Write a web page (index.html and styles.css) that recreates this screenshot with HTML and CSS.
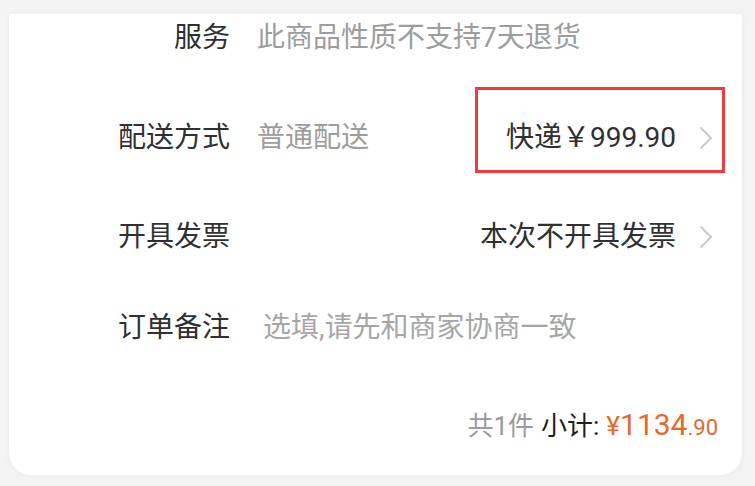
FILE: index.html
```html
<!DOCTYPE html>
<html lang="zh-CN">
<head>
<meta charset="utf-8">
<title>订单确认</title>
<link rel="stylesheet" href="styles.css">
</head>
<body>
<div class="card">
  <div class="row">
    <span class="label">服务</span>
    <span class="value">此商品性质不支持7天退货</span>
  </div>
  <div class="row row-delivery">
    <span class="label">配送方式</span>
    <span class="value">普通配送</span>
    <div class="action highlight">
      <span class="action-text">快递￥999.90</span>
      <svg class="chev" width="14" height="24" viewBox="0 0 14 24"><polyline points="2,2 12,12 2,22" fill="none" stroke="#cbcbcb" stroke-width="2" stroke-linecap="round" stroke-linejoin="round"/></svg>
    </div>
  </div>
  <div class="row row-invoice">
    <span class="label">开具发票</span>
    <div class="action">
      <span class="action-text">本次不开具发票</span>
      <svg class="chev" width="14" height="24" viewBox="0 0 14 24"><polyline points="2,2 12,12 2,22" fill="none" stroke="#cbcbcb" stroke-width="2" stroke-linecap="round" stroke-linejoin="round"/></svg>
    </div>
  </div>
  <div class="row row-note">
    <span class="label">订单备注</span>
    <span class="placeholder">选填,请先和商家协商一致</span>
  </div>
  <div class="row row-total">
    <span class="count">共1件</span>
    <span class="subtotal">小计:</span>
    <span class="price"><span class="cur">¥</span><span class="int">1134</span><span class="dec">.90</span></span>
  </div>
</div>
</body>
</html>
```

FILE: styles.css
```css
html, body {
  margin: 0;
  padding: 0;
  background: #f3f3f3;
}
body {
  width: 755px;
  height: 486px;
  overflow: hidden;
  font-family: Roboto, "Noto Sans CJK SC", sans-serif;
}
.card {
  margin: 14px 13px 0 9px;
  padding: 4px 24px 30px 28px;
  background: #fff;
  border-radius: 0 0 22px 22px;
  box-shadow: 0 0 6px rgba(0, 0, 0, 0.04);
}
.row {
  display: flex;
  align-items: center;
  height: 40px;
  font-size: 28px;
  line-height: 40px;
  white-space: nowrap;
}
.row-delivery { margin-top: 60px; }
.row-invoice { margin-top: 59px; }
.row-note { margin-top: 51px; }
.row-total {
  margin-top: 57px;
  justify-content: flex-end;
  align-items: baseline;
}
.label {
  flex: none;
  width: 193px;
  text-align: right;
  color: #303030;
}
.value {
  margin-left: 27px;
  color: #9d9d9d;
}
.placeholder {
  margin-left: 33px;
  color: #a6a6a6;
}
.action {
  margin-left: auto;
  margin-right: 5px;
  display: flex;
  align-items: center;
  position: relative;
  color: #303030;
}
.chev {
  margin-left: 23px;
  display: block;
}
.highlight::after {
  content: "";
  position: absolute;
  left: -31px;
  right: -12px;
  top: -31px;
  bottom: -15px;
  border: 3px solid #f23a3a;
}
.count {
  font-size: 26px;
  color: #9a9a9a;
}
.subtotal {
  font-size: 26px;
  color: #1e1e1e;
  margin-left: 7px;
}
.price {
  margin-left: 7px;
  color: #e4692c;
}
.cur { font-size: 26px; }
.int { font-size: 30px; }
.dec { font-size: 22px; }
```
